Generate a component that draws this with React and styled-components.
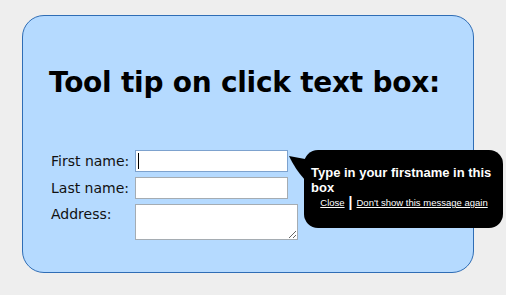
import React from 'react'
import styled, { createGlobalStyle } from 'styled-components'

const GlobalStyle = createGlobalStyle`
  body {
    margin: 0;
    background: #eeeeee;
  }
`

export default function App() {
  return (
    <Page>
      <GlobalStyle />
      <Card>
        <Title>Tool tip on click text box:</Title>
        <Form>
          <Label>First name:</Label>
          <FieldWrap>
            <TextInput type="text" focused />
            <Caret />
          </FieldWrap>
          <Label>Last name:</Label>
          <FieldWrap>
            <TextInput type="text" />
          </FieldWrap>
          <Label top>Address:</Label>
          <FieldWrap>
            <TextArea />
          </FieldWrap>

          <Tooltip>
            <Tail width="18" height="28" viewBox="0 0 18 28">
              <path d="M1 2 L17 5 L17 26 Q 7 15 1 2 Z" fill="#000" />
            </Tail>
            <TipText>Type in your firstname in this box</TipText>
            <TipLinks>
              <TipLink href="#">Close</TipLink>
              <Separator>|</Separator>
              <TipLink href="#">Don't show this message again</TipLink>
            </TipLinks>
          </Tooltip>
        </Form>
      </Card>
    </Page>
  )
}

const Page = styled.div`
  padding: 15px 0 0 22px;
`

const Card = styled.div`
  box-sizing: border-box;
  width: 452px;
  height: 258px;
  border: 1px solid #2f6db5;
  border-radius: 22px;
  background: #b5daff;
  padding: 50px 0 0 26px;
`

const Title = styled.h1`
  margin: 0;
  font-family: "DejaVu Sans", sans-serif;
  font-weight: bold;
  font-size: 28px;
  letter-spacing: -0.25px;
  line-height: 34px;
  color: #000;
`

const Form = styled.div`
  position: relative;
  margin: 50px 0 0 2px;
  display: grid;
  grid-template-columns: 84px auto;
  row-gap: 5px;
  align-items: center;
`

const Label = styled.label`
  font-family: "DejaVu Sans", sans-serif;
  font-size: 14px;
  color: #111;
  align-self: ${p => (p.top ? 'start' : 'center')};
  padding-top: ${p => (p.top ? '2px' : '0')};
`

const FieldWrap = styled.div`
  position: relative;
  display: flex;
`

const TextInput = styled.input`
  box-sizing: border-box;
  width: 153px;
  height: 22px;
  margin: 0;
  padding: 0 3px;
  border: 1px solid ${p => (p.focused ? '#7da2ce' : '#a5acb2')};
  background: #fff;
  outline: none;
`

const Caret = styled.span`
  position: absolute;
  left: 3px;
  top: 3px;
  width: 1px;
  height: 16px;
  background: #000;
`

const TextArea = styled.textarea`
  box-sizing: border-box;
  width: 163px;
  height: 36px;
  margin: 0;
  border: 1px solid #a5acb2;
  background: #fff;
`

const Tooltip = styled.div`
  position: absolute;
  left: 253px;
  top: 0;
  box-sizing: border-box;
  width: 199px;
  height: 78px;
  padding: 15px 6px 0 7px;
  background: #000;
  border-radius: 14px;
  color: #fff;
  font-family: "Liberation Sans", Arial, sans-serif;
`

const Tail = styled.svg`
  position: absolute;
  left: -16px;
  top: 4px;
`

const TipText = styled.div`
  font-size: 13px;
  font-weight: bold;
  line-height: 15px;
`

const TipLinks = styled.div`
  margin-top: 1px;
  text-align: center;
  font-size: 9.5px;
  line-height: 14px;
`

const TipLink = styled.a`
  color: #fff;
  text-decoration: underline;
`

const Separator = styled.span`
  display: inline-block;
  margin: 0 4px;
  font-size: 14px;
  font-weight: bold;
  line-height: 12px;
  vertical-align: -1px;
`
